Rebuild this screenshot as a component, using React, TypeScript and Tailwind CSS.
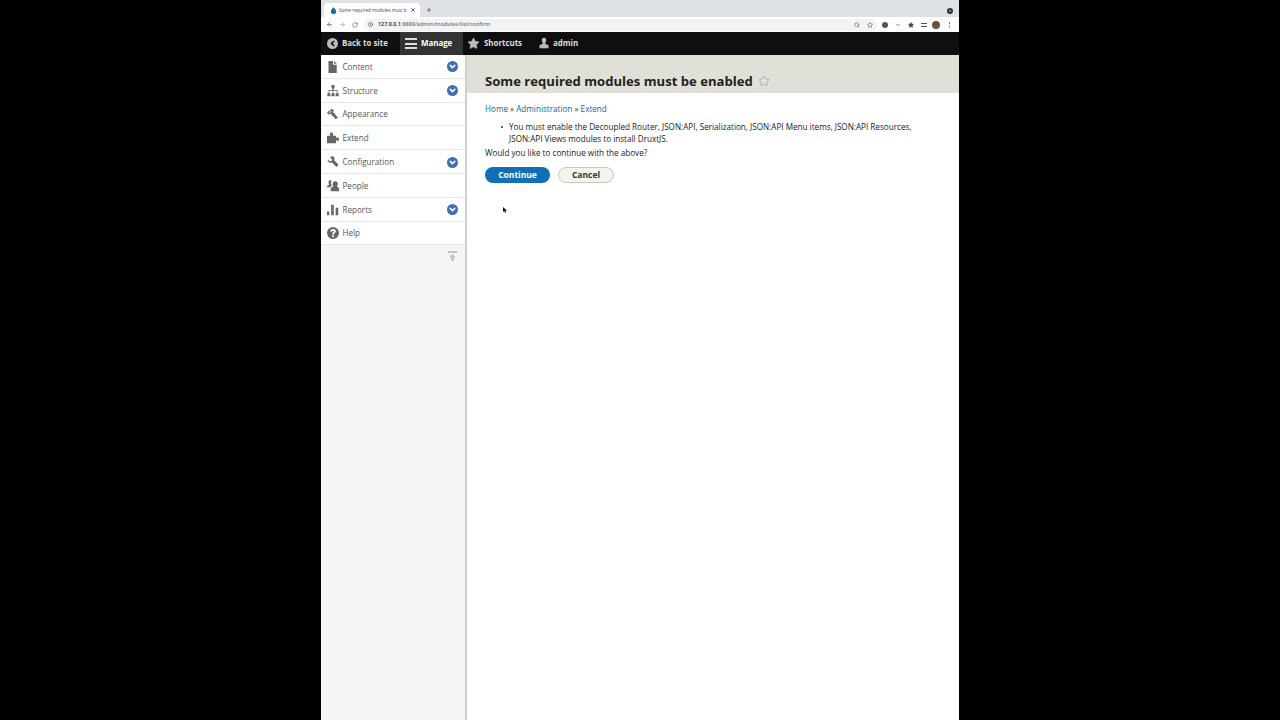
import { ArrowLeft, ArrowRight, ChevronDown, Info, Plus, RotateCw, Search, Star, X } from "lucide-react"
import type { ReactNode } from "react"

const fileIcon = <path d="M2 0h6v5h5v11H2zM9.5 0 13 3.6H9.500z" />
const treeIcon = (
  <path d="M6 0h4v4H9v2.5h5V11h1.500v4h-4v-4H13V7.500H8.500V11H10v4H6v-4h1.500V7.500H3V11h1.500v4h-4v-4H2V6.500h5V4H6z" />
)
const hammerIcon = (
  <path
    fillRule="evenodd"
    d="M6.500 1 0 6l2.500 3 2.200-1.800 1.600 1.400-.5 1 1 1 .8-.3 4 4.700 3-2.500-4.300-4.400.5-.8-1-1-1 .3-1-1.300 1.500-1.500zM5.800 3.200 2.600 5.800l.6.800 3.200-2.600z"
  />
)
const puzzleIcon = (
  <path d="M0 5h4.500C3 3 3.500 0.500 6 0.500S9 3 7.500 5H12v3c1.500-1 4-.8 4 1.500s-2.500 2.500-4 1.500v4H0z" />
)
const wrenchIcon = (
  <path d="M1 4.500 3.500 7 6 6.500 6.500 4 4 1.500C6-.5 9.500.500 10 3c.2 1-.1 1.800-.4 2.600l5.900 6-3 3-6-5.900c-.8.3-1.700.5-2.600.3C1.500 8.500.500 6.500 1 4.500z" />
)
const peopleIcon = (
  <path d="M2 2.500a2.500 2.500 0 0 1 4.500-1.200A3.500 3.500 0 0 0 6 6v1.500l-1 .8V9.500H0V8l2.500-1.500v-1C2.200 4.700 2 3.500 2 2.500zM7.500 5a3.500 3.500 0 0 1 7 0c0 1-.3 2-.9 2.700V9l2.400 1.500V15H5v-4.500L7.900 9V7.700C7.800 7 7.500 6 7.500 5z" />
)
const barsIcon = <path d="M0 10h3v5H0zM5.500 1h3.500v14H5.500zM11.500 5H15v10h-3.500z" />
const helpIcon = (
  <path
    fillRule="evenodd"
    d="M8 0a8 8 0 1 0 0 16A8 8 0 0 0 8 0zm-1.200 11h2.400v2.300H6.800zM8 2.800c2.200 0 3.700 1.200 3.700 3 0 1.300-.8 2-1.600 2.600-.6.400-.9.700-.9 1.600H6.800c0-1.500.5-2.200 1.400-2.800.6-.4 1-.7 1-1.300 0-.6-.5-1-1.200-1-.8 0-1.300.5-1.400 1.300L4.300 5.900C4.500 4 6 2.800 8 2.800z"
  />
)

const items: { label: string; icon: ReactNode; more?: boolean }[] = [
  { label: "Content", icon: fileIcon, more: true },
  { label: "Structure", icon: treeIcon, more: true },
  { label: "Appearance", icon: hammerIcon },
  { label: "Extend", icon: puzzleIcon },
  { label: "Configuration", icon: wrenchIcon, more: true },
  { label: "People", icon: peopleIcon },
  { label: "Reports", icon: barsIcon, more: true },
  { label: "Help", icon: helpIcon },
]

function MenuIcon({ children, className }: { children: ReactNode; className: string }) {
  return (
    <svg viewBox="0 0 16 16" className={className} fill="currentColor">
      {children}
    </svg>
  )
}

function BrowserBar() {
  return (
    <div className="shrink-0 text-[#5f6368]">
      <div className="h-[17px] bg-[#dee1e6] flex items-end pl-[3px] pr-[6px]">
        <div className="w-[96px] h-[14px] bg-white rounded-t-[4px] flex items-center pl-[6px] pr-[4px]">
          <svg viewBox="0 0 16 16" className="w-[7px] h-[7px] shrink-0 text-[#1b6f9e]" fill="currentColor">
            <path d="M8 0c1 3 6 5 6 10a6 6 0 0 1-12 0C2 5 7 3 8 0z" />
          </svg>
          <span className="ml-[2px] text-[4.6px] text-[#45474a] whitespace-nowrap flex-1">
            Some required modules must b
          </span>
          <X className="w-[6px] h-[6px] shrink-0 text-[#333]" strokeWidth={3} />
        </div>
        <Plus className="w-[6px] h-[6px] ml-[6px] mb-[4px] text-[#555]" strokeWidth={3} />
        <div className="ml-auto mb-[3px] w-[6px] h-[6px] rounded-full border-[2px] border-[#333] bg-[#999]" />
      </div>
      <div className="h-[15px] bg-white flex items-center pl-[5px] pr-[6px]">
        <ArrowLeft className="w-[7px] h-[7px]" strokeWidth={2.5} />
        <ArrowRight className="w-[7px] h-[7px] ml-[6px] text-[#a8abaf]" strokeWidth={2.5} />
        <RotateCw className="w-[6px] h-[6px] ml-[6px]" strokeWidth={2.5} />
        <div className="ml-[6px] w-[513px] h-[12px] rounded-full bg-[#f1f3f4] flex items-center pl-[4px] pr-[4px]">
          <Info className="w-[5px] h-[5px] text-[#444]" strokeWidth={2.5} />
          <span className="ml-[5px] text-[5.4px] font-semibold text-[#777] whitespace-nowrap">
            <span className="text-[#222]">127.0.0.1</span>:8888/admin/modules/list/confirm
          </span>
          <Search className="w-[6px] h-[6px] ml-auto" strokeWidth={2.5} />
          <Star className="w-[6px] h-[6px] ml-[7px]" strokeWidth={2.5} />
        </div>
        <div className="ml-[5px] w-[6px] h-[6px] rounded-full bg-[#555]" />
        <ChevronDown className="w-[6px] h-[6px] ml-[7px] text-[#888]" strokeWidth={4} />
        <Star className="w-[6px] h-[6px] ml-[7px] text-[#444]" fill="currentColor" />
        <div className="ml-[7px] w-[6px] h-[4px] border-t border-b border-[#555]" />
        <div className="ml-[5px] w-[8px] h-[8px] rounded-full bg-[#6b4f42]" />
        <div className="ml-[9px] w-[1px] h-[6px] border-l border-dotted border-[#777]" />
      </div>
    </div>
  )
}

function AdminBar() {
  return (
    <div className="h-[23px] shrink-0 bg-[#0f0f0f] flex items-center text-[7.9px] font-bold text-[#ddd]">
      <div className="flex items-center pl-[6px] w-[79px]">
        <svg viewBox="0 0 16 16" className="w-[11px] h-[11px] text-[#bbb]" fill="currentColor">
          <path
            fillRule="evenodd"
            d="M8 0a8 8 0 1 0 0 16A8 8 0 0 0 8 0zm1.500 3.500 1.700 1.700L8.400 8l2.800 2.800-1.700 1.700L5 8z"
          />
        </svg>
        <span className="ml-[4px] pt-[1px]">Back to site</span>
      </div>
      <div className="h-full w-[63px] bg-[#333] flex items-center pl-[5px] text-white">
        <div className="w-[12px] h-[11px] flex flex-col justify-between">
          <div className="h-[2px] bg-[#ddd]" />
          <div className="h-[2px] bg-[#ddd]" />
          <div className="h-[2px] bg-[#ddd]" />
        </div>
        <span className="ml-[4px] pt-[1px]">Manage</span>
      </div>
      <div className="flex items-center pl-[4px] w-[75px]">
        <Star className="w-[13px] h-[13px] text-[#bbb]" fill="currentColor" strokeWidth={1} />
        <span className="ml-[4px] pt-[1px]">Shortcuts</span>
      </div>
      <div className="flex items-center">
        <svg viewBox="0 0 16 16" className="w-[12px] h-[12px] text-[#bbb]" fill="currentColor">
          <path d="M5 4a3 3 0 0 1 6 0c0 1.300-.5 2.500-1.200 3.300V9L14 11v4H2v-4l4.200-2V7.300C5.500 6.500 5 5.300 5 4z" />
        </svg>
        <span className="ml-[3px] pt-[1px]">admin</span>
      </div>
    </div>
  )
}

function Sidebar() {
  return (
    <aside className="w-[146px] shrink-0 bg-[#f5f5f5] border-r-2 border-[#cfcfcf]">
      <ul className="bg-white">
        {items.map((item) => (
          <li
            key={item.label}
            className="h-[23.8px] flex items-center border-b border-[#e6e6e6] pl-[6px] pr-[7px] pt-[1px] text-[#565656]"
          >
            <MenuIcon className="w-[12px] h-[12px] text-[#666] shrink-0">{item.icon}</MenuIcon>
            <span className="ml-[3.5px] text-[8.1px] whitespace-nowrap">{item.label}</span>
            {item.more && (
              <div className="ml-auto w-[11px] h-[11px] rounded-full bg-[#3f6fb4] flex items-center justify-center">
                <ChevronDown className="w-[9px] h-[9px] text-white" strokeWidth={4} />
              </div>
            )}
          </li>
        ))}
      </ul>
      <div className="flex flex-col items-end pr-[8px] pt-[6px]">
        <div className="w-[9px] h-[2px] bg-[#c4c4c4]" />
        <svg viewBox="0 0 8 8" className="w-[7px] h-[7px] mt-[1px] mr-[1px] text-[#c4c4c4]" fill="currentColor">
          <path d="M4 0l4 4H5.500v4h-3V4H0z" />
        </svg>
      </div>
    </aside>
  )
}

function Content() {
  return (
    <main className="flex-1 bg-white relative">
      <div className="h-[38px] bg-[#e0e0d8] flex items-end pl-[18px] pb-[2px]">
        <h1 className="text-[13.1px] leading-[20px] font-bold text-[#222] whitespace-nowrap">
          Some required modules must be enabled
        </h1>
        <Star className="w-[12px] h-[12px] ml-[5px] mb-[4px] text-[#a0a0a0]" strokeWidth={1.5} />
      </div>
      <div className="pl-[18px] pr-[40px] text-[8.15px] text-[#222]">
        <div className="mt-[10px] leading-[12px] text-[#0a6a9c]">
          Home <span className="text-[#444]">»</span> Administration <span className="text-[#444]">»</span> Extend
        </div>
        <div className="mt-[6px] ml-[16px] flex items-start gap-[6px] leading-[12px]">
          <span className="mt-[5px] w-[2px] h-[2px] shrink-0 rounded-full bg-[#333]" />
          <p>
            You must enable the Decoupled Router, JSON:API, Serialization, JSON:API Menu items, JSON:API Resources,
            JSON:API Views modules to install DruxtJS.
          </p>
        </div>
        <p className="mt-[2px] leading-[12px]">Would you like to continue with the above?</p>
        <div className="mt-[8px] flex items-center gap-[8px] font-bold text-[8.5px]">
          <button className="w-[65px] h-[16px] rounded-full bg-[#0f70b7] text-white">Continue</button>
          <button className="w-[56px] h-[16px] rounded-full bg-[#f4f4ef] border border-[#c8c8bf] text-[#333]">
            Cancel
          </button>
        </div>
      </div>
      <svg viewBox="0 0 8 12" className="absolute left-[36px] top-[152px] w-[4px] h-[6px] text-[#111]" fill="currentColor">
        <path d="M0 0v10l2.500-2L4 12l2-1-1.500-3.500H8z" />
      </svg>
    </main>
  )
}

export default function App() {
  return (
    <div className="w-[1280px] h-[720px] bg-black flex justify-center overflow-hidden font-['Open_Sans',sans-serif]">
      <div className="w-[638px] h-full flex flex-col">
        <BrowserBar />
        <AdminBar />
        <div className="flex-1 flex">
          <Sidebar />
          <Content />
        </div>
      </div>
    </div>
  )
}
